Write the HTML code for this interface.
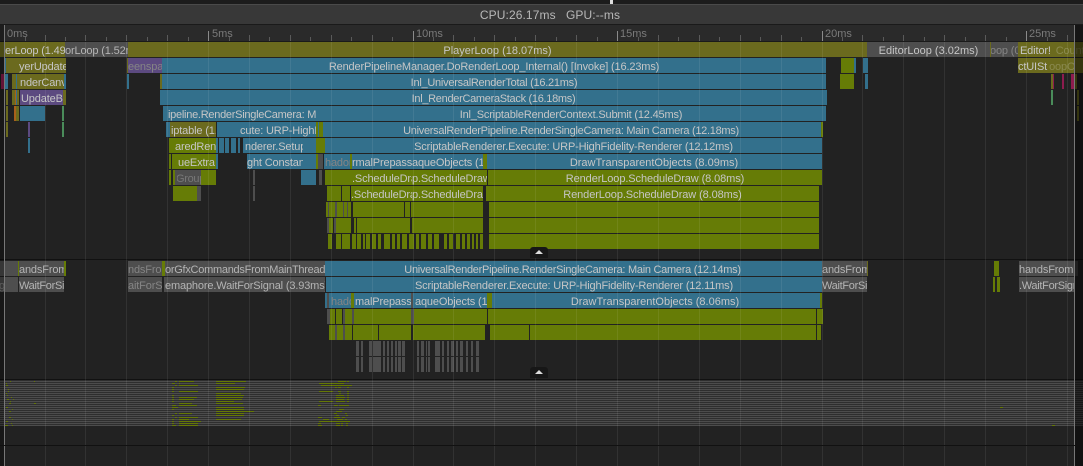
<!DOCTYPE html>
<html><head><meta charset="utf-8">
<style>
html,body{margin:0;padding:0;background:#222}
#p{position:relative;width:1083px;height:466px;overflow:hidden;background:#222;font-family:"Liberation Sans",sans-serif;font-size:11px;color:#c6c6c6}
#p div{position:absolute}
.r{left:0;width:1083px;height:15px}
.r b{position:absolute;top:0;height:15px;line-height:18px;font-weight:normal;white-space:nowrap;overflow:hidden;text-align:center;letter-spacing:-.15px}
.o{background:#6b6a1e}.g{background:#667c06}.u{background:#33708c}.p{background:#5c4a80}.y{background:#4e4e4e;color:#b4b4b4}
.d{color:#858585}.e{background:#4a8c5a}.c{background:#8e1c4e}.f{background:#a8601a}
.l{text-align:left!important}
.t{width:18px;height:11px;background:#171717;border-radius:3px 3px 0 0}
.t:after{content:"";position:absolute;left:5px;top:3px;border-left:4px solid transparent;border-right:4px solid transparent;border-bottom:4px solid #ddd}
svg{position:absolute;left:0;top:0}
</style></head><body><div id="p">
<div style="left:0;top:0;width:1083px;height:4px;background:#1c1c1c"></div>
<div style="left:610px;top:0;width:3px;height:4px;background:#ddd"></div>
<div style="left:0;top:4px;width:1083px;height:1px;background:#4a4a4a"></div>
<div style="left:0;top:5px;width:1083px;height:19px;background:#383838;text-align:center;line-height:20px;font-size:12px;color:#b8b8b8;text-indent:17px;letter-spacing:.1px">CPU:26.17ms&nbsp;&nbsp; GPU:--ms</div>
<div style="left:0;top:24px;width:1083px;height:1px;background:#1a1a1a"></div>
<div style="left:0;top:25px;width:1083px;height:16px;background:#2a2a2a"></div>
<div style="left:0;top:41px;width:1083px;height:1px;background:#1a1a1a"></div>
<div class="lb" style="left:7px;top:27px;color:#7a7a7a;line-height:14px">0ms</div>
<div style="left:212px;top:27px;color:#7a7a7a;line-height:14px">5ms</div>
<div style="left:416px;top:27px;color:#7a7a7a;line-height:14px">10ms</div>
<div style="left:620px;top:27px;color:#7a7a7a;line-height:14px">15ms</div>
<div style="left:825px;top:27px;color:#7a7a7a;line-height:14px">20ms</div>
<div style="left:1029px;top:27px;color:#7a7a7a;line-height:14px">25ms</div>

<div class="r" style="top:42px">
<b class="o l" style="left:0;width:65px;text-indent:5px">erLoop (1.49ms)</b>
<b class="y l" style="left:65px;width:63px">orLoop (1.52ms)</b>
<b class="o" style="left:128px;width:739px;letter-spacing:0">PlayerLoop (18.07ms)</b>
<b class="y" style="left:867px;width:123px;color:#c6c6c6;letter-spacing:0">EditorLoop (3.02ms)</b>
<b class="o" style="left:990px;width:1px"></b>
<b class="y d l" style="left:991px;width:27px;text-indent:-1px">oop (0.1ms)</b>
<b class="o l" style="left:1018px;width:65px;text-indent:2px">Editor!<span style="margin-left:5px;color:#8a8a50">Count</span></b>
</div>
<div class="r" style="top:58px">
<b class="o" style="left:4px;width:2px"></b><b class="u" style="left:5px;width:1px"></b>
<b class="o l" style="left:6px;width:60px;text-indent:13px">yerUpdate</b>
<b class="o" style="left:127px;width:2px"></b>
<b class="p d l" style="left:128px;width:34px">eenspace</b>
<b class="u" style="left:162px;width:664px">RenderPipelineManager.DoRenderLoop_Internal() [Invoke] (16.23ms)</b>
<b class="g" style="left:841px;width:13px"></b><b class="u" style="left:854px;width:2px"></b>
<b class="u" style="left:863px;width:5px"></b>
<b class="o l" style="left:1018px;width:65px">ctUISt<span style="margin-left:2px;color:#8a8a50">oopO</span></b>
</div>
<div class="r" style="top:74px">
<b class="c" style="left:1px;width:3px"></b><b class="u" style="left:5px;width:3px"></b>
<b class="o l" style="left:12px;width:54px;text-indent:8px">nderCanvas</b>
<b class="u" style="left:16px;width:1px"></b><b class="u" style="left:64px;width:2px"></b>
<b class="u" style="left:127px;width:2px"></b>
<b class="o" style="left:160px;width:2px"></b>
<b class="u" style="left:162px;width:664px;letter-spacing:-.26px">Inl_UniversalRenderTotal (16.21ms)</b>
<b class="g" style="left:840px;width:14px"></b>
<b class="u" style="left:865px;width:3px"></b>
<b class="o" style="left:1051px;width:2px"></b><b class="c" style="left:1053px;width:1px"></b>
<b class="c" style="left:1062px;width:2px"></b><b class="c" style="left:1071px;width:4px"></b>
<b class="o" style="left:1075px;width:2px"></b>
</div>
<div class="r" style="top:90px">
<b class="o" style="left:6px;width:2px"></b><b class="o" style="left:12px;width:3px"></b>
<b class="f" style="left:15px;width:1px"></b><b class="u" style="left:16px;width:1px"></b><b class="o" style="left:17px;width:2px"></b>
<b class="p l" style="left:20px;width:43px;text-indent:1px">UpdateBatches</b>
<b class="o" style="left:63px;width:3px"></b>
<b class="u" style="left:160px;width:667px;letter-spacing:-.3px">Inl_RenderCameraStack (16.18ms)</b>
<b class="e" style="left:1051px;width:2px"></b><b class="o" style="left:1077px;width:2px"></b>
</div>
<div class="r" style="top:106px">
<b class="o" style="left:6px;width:2px"></b><b class="f" style="left:14px;width:2px"></b><b class="o" style="left:16px;width:3px"></b>
<b class="u" style="left:20px;width:25px"></b><b class="e" style="left:62px;width:2px"></b>
<b class="u l" style="left:163px;width:153px;text-indent:5px;letter-spacing:-.27px">ipeline.RenderSingleCamera: Main</b>
<b class="u" style="left:316px;width:510px;letter-spacing:-.18px">Inl_ScriptableRenderContext.Submit (12.45ms)</b>
<b class="o" style="left:1077px;width:2px"></b>
</div>
<div class="r" style="top:122px">
<b class="o" style="left:6px;width:2px"></b><b class="p" style="left:28px;width:2px"></b><b class="e" style="left:62px;width:2px"></b>
<b class="u" style="left:166px;width:4px"></b>
<b class="o l" style="left:170px;width:46px;text-indent:1px">iptable (1.2ms)</b>
<b class="u l" style="left:217px;width:99px;text-indent:23px">cute: URP-HighFid</b>
<b class="g" style="left:316px;width:2px"></b><b class="u" style="left:318px;width:1px"></b><b class="g" style="left:319px;width:4px"></b>
<b class="u" style="left:323px;width:499px;letter-spacing:-.29px;text-indent:-3px">UniversalRenderPipeline.RenderSingleCamera: Main Camera (12.18ms)</b>
<b class="g" style="left:821px;width:2px"></b>
</div>
<div class="r" style="top:138px">
<b class="u" style="left:28px;width:2px"></b>
<b class="g l" style="left:169px;width:47px;text-indent:6px">aredRenderer</b>
<b class="u" style="left:216px;width:2px"></b><b class="u" style="left:219px;width:5px"></b><b class="u" style="left:225px;width:4px"></b><b class="u" style="left:231px;width:5px"></b><b class="u" style="left:238px;width:2px"></b>
<b class="u l" style="left:243px;width:60px;text-indent:2px">nderer.Setup</b><b class="u" style="left:303px;width:13px"></b>
<b class="g" style="left:316px;width:9px"></b>
<b class="u" style="left:325px;width:497px;letter-spacing:-.17px">ScriptableRenderer.Execute: URP-HighFidelity-Renderer (12.12ms)</b>
</div>
<div class="r" style="top:154px">
<b class="g" style="left:169px;width:2px"></b>
<b class="g l" style="left:172px;width:44px;text-indent:6px">ueExtra</b>
<b class="u" style="left:216px;width:2px"></b>
<b class="u l" style="left:247px;width:56px">ght Constant</b><b class="u" style="left:303px;width:13px"></b>
<b class="g" style="left:316px;width:2px"></b><b class="y" style="left:318px;width:5px"></b>
<b class="u d l" style="left:324px;width:26px;text-indent:1px">hador</b>
<b class="g" style="left:350px;width:2px"></b>
<b class="u l" style="left:352px;width:60px">rmalPrepass</b>
<b class="u l" style="left:412px;width:71px">aqueObjects (1.2ms)</b>
<b class="g" style="left:483px;width:4px"></b>
<b class="u" style="left:487px;width:335px;letter-spacing:0;text-indent:-1px">DrawTransparentObjects (8.09ms)</b>
</div>
<div class="r" style="top:170px">
<b class="g" style="left:169px;width:2px"></b><b class="g" style="left:173px;width:2px"></b>
<b class="y" style="left:175px;width:2px"></b>
<b class="y d l" style="left:177px;width:24px;text-indent:-1px;letter-spacing:-.3px;color:#777">Group</b>
<b class="g" style="left:201px;width:15px"></b>
<b class="y" style="left:253px;width:2px"></b><b class="u" style="left:301px;width:15px"></b><b class="y" style="left:319px;width:3px"></b>
<b class="g l" style="left:325px;width:87px;text-indent:27px">.ScheduleDraw</b>
<b class="g l" style="left:412px;width:75px">p.ScheduleDraw</b>
<b class="g" style="left:488px;width:334px;letter-spacing:-.1px">RenderLoop.ScheduleDraw (8.08ms)</b>
</div>
<div class="r" style="top:186px">
<b class="g" style="left:173px;width:24px"></b><b class="y" style="left:197px;width:4px"></b>
<b class="y" style="left:253px;width:2px"></b>
<b class="g" style="left:327px;width:14px"></b><b class="g" style="left:342px;width:8px"></b>
<b class="g l" style="left:351px;width:61px">.ScheduleDraw</b>
<b class="g l" style="left:412px;width:71px">p.ScheduleDraw</b>
<b class="g" style="left:486px;width:333px;letter-spacing:-.1px">RenderLoop.ScheduleDraw (8.08ms)</b>
</div>
<div class="r" style="top:202px">
<b class="g" style="left:326px;width:25px"></b><b class="y" style="left:328px;width:1px"></b><b class="y" style="left:335px;width:2px"></b><b class="y" style="left:343px;width:1px"></b><b class="y" style="left:347px;width:1px"></b>
<b class="g" style="left:353px;width:51px"></b><b class="g" style="left:405px;width:5px"></b><b class="g" style="left:411px;width:72px"></b><b class="g" style="left:489px;width:330px"></b>
</div>
<div class="r" style="top:218px">
<b class="y" style="left:327px;width:2px"></b><b class="g" style="left:329px;width:4px"></b><b class="y" style="left:334px;width:2px"></b><b class="g" style="left:336px;width:15px"></b>
<b class="g" style="left:354px;width:2px"></b><b class="g" style="left:357px;width:53px"></b><b class="g" style="left:412px;width:71px"></b><b class="g" style="left:489px;width:330px"></b>
</div>
<div class="r" style="top:234px">
<b class="g" style="left:328px;width:4px"></b><b class="g" style="left:336px;width:5px"></b><b class="g" style="left:342px;width:8px"></b><b class="g" style="left:352px;width:4px"></b><b class="g" style="left:357px;width:4px"></b><b class="g" style="left:363px;width:2px"></b><b class="g" style="left:366px;width:4px"></b><b class="g" style="left:372px;width:4px"></b><b class="g" style="left:378px;width:3px"></b><b class="g" style="left:384px;width:6px"></b><b class="g" style="left:392px;width:3px"></b><b class="g" style="left:397px;width:3px"></b><b class="g" style="left:402px;width:5px"></b><b class="g" style="left:409px;width:5px"></b><b class="g" style="left:416px;width:3px"></b><b class="g" style="left:421px;width:5px"></b><b class="g" style="left:428px;width:4px"></b><b class="g" style="left:434px;width:5px"></b><b class="g" style="left:444px;width:3px"></b><b class="g" style="left:449px;width:4px"></b><b class="g" style="left:456px;width:4px"></b><b class="g" style="left:462px;width:3px"></b><b class="g" style="left:467px;width:3px"></b><b class="g" style="left:472px;width:2px"></b><b class="g" style="left:476px;width:2px"></b><b class="g" style="left:480px;width:3px"></b><b class="g" style="left:489px;width:330px"></b>
</div>

<div style="left:0;top:259px;width:1083px;height:1px;background:#111"></div>
<div class="r" style="top:261px">
<b class="y" style="left:0;width:7px"></b><b class="y" style="left:7px;width:11px"></b><b class="g" style="left:18px;width:1px"></b>
<b class="y l" style="left:19px;width:45px">andsFrom</b><b class="g" style="left:64px;width:2px"></b>
<b class="y d l" style="left:128px;width:34px">ndsFrom</b><b class="g" style="left:162px;width:3px"></b>
<b class="y l" style="left:165px;width:160px;letter-spacing:-.27px">orGfxCommandsFromMainThread</b>
<b class="u" style="left:325px;width:497px;letter-spacing:-.28px;text-indent:-2px">UniversalRenderPipeline.RenderSingleCamera: Main Camera (12.14ms)</b>
<b class="y l" style="left:822px;width:45px">andsFrom</b><b class="o" style="left:867px;width:1px"></b>
<b class="g" style="left:994px;width:5px"></b>
<b class="y l" style="left:1019px;width:55px">handsFromM</b><b class="y" style="left:1074px;width:4px;opacity:.7"></b>
</div>
<div class="r" style="top:277px">
<b class="y d l" style="left:0;width:7px;text-indent:-1px">g</b><b class="y" style="left:7px;width:11px"></b>
<b class="y l" style="left:19px;width:45px;letter-spacing:-.3px">WaitForSignal</b>
<b class="y d l" style="left:128px;width:34px">aitForSi</b>
<b class="y l" style="left:164px;width:161px;text-indent:1px">emaphore.WaitForSignal (3.93ms)</b>
<b class="u" style="left:326px;width:496px;letter-spacing:-.17px">ScriptableRenderer.Execute: URP-HighFidelity-Renderer (12.11ms)</b>
<b class="y l" style="left:822px;width:45px;letter-spacing:-.3px">WaitForSignal</b>
<b class="g" style="left:993px;width:2px"></b><b class="g" style="left:997px;width:3px"></b>
<b class="y l" style="left:1019px;width:55px;letter-spacing:-.3px">.WaitForSignal</b>
</div>
<div class="r" style="top:293px">
<b class="u" style="left:325px;width:2px"></b><b class="y" style="left:327px;width:2px"></b>
<b class="u d l" style="left:329px;width:22px;text-indent:2px">hado</b>
<b class="g" style="left:351px;width:3px"></b>
<b class="u l" style="left:354px;width:57px;text-indent:1px">malPrepass</b>
<b class="y" style="left:411px;width:2px"></b>
<b class="u l" style="left:413px;width:74px;text-indent:2px">aqueObjects (1.2ms)</b>
<b class="g" style="left:487px;width:5px"></b>
<b class="u" style="left:492px;width:328px;letter-spacing:0;text-indent:-2px">DrawTransparentObjects (8.06ms)</b>
<b class="g" style="left:820px;width:2px"></b>
</div>
<div class="r" style="top:309px">
<b class="y" style="left:327px;width:3px"></b><b class="g" style="left:330px;width:5px"></b><b class="g" style="left:336px;width:6px"></b><b class="y" style="left:343px;width:2px"></b><b class="g" style="left:345px;width:7px"></b><b class="y" style="left:352px;width:2px"></b><b class="g" style="left:354px;width:57px"></b><b class="y" style="left:411px;width:3px"></b><b class="g" style="left:414px;width:73px"></b><b class="g" style="left:488px;width:328px"></b><b class="g" style="left:817px;width:6px"></b>
</div>
<div class="r" style="top:325px">
<b class="g" style="left:329px;width:6px"></b><b class="y" style="left:335px;width:2px"></b><b class="g" style="left:337px;width:6px"></b><b class="y" style="left:343px;width:2px"></b><b class="g" style="left:345px;width:7px"></b><b class="g" style="left:353px;width:25px"></b><b class="g" style="left:379px;width:32px"></b><b class="g" style="left:413px;width:72px"></b><b class="g" style="left:490px;width:39px"></b><b class="g" style="left:530px;width:286px"></b><b class="g" style="left:817px;width:4px"></b>
</div>
<div class="r" style="top:341px">
<b class="y" style="left:356px;width:3px"></b><b class="y" style="left:361px;width:2px"></b><b class="y" style="left:369px;width:3px"></b><b class="y" style="left:373px;width:8px"></b><b class="y" style="left:383px;width:2px"></b><b class="y" style="left:387px;width:2px"></b><b class="y" style="left:391px;width:2px"></b><b class="y" style="left:395px;width:2px"></b><b class="y" style="left:398px;width:3px"></b><b class="y" style="left:402px;width:3px"></b><b class="y" style="left:417px;width:2px"></b><b class="y" style="left:421px;width:3px"></b><b class="y" style="left:426px;width:1px"></b><b class="y" style="left:428px;width:2px"></b><b class="y" style="left:435px;width:5px"></b><b class="y" style="left:442px;width:2px"></b><b class="y" style="left:447px;width:2px"></b><b class="y" style="left:451px;width:3px"></b><b class="y" style="left:456px;width:2px"></b><b class="y" style="left:460px;width:3px"></b><b class="y" style="left:466px;width:2px"></b><b class="y" style="left:471px;width:2px"></b><b class="y" style="left:476px;width:3px"></b>
</div>
<div class="r" style="top:357px">
<b class="y" style="left:356px;width:3px"></b><b class="y" style="left:361px;width:2px"></b><b class="y" style="left:369px;width:3px"></b><b class="y" style="left:373px;width:8px"></b><b class="y" style="left:383px;width:2px"></b><b class="y" style="left:387px;width:2px"></b><b class="y" style="left:391px;width:2px"></b><b class="y" style="left:395px;width:2px"></b><b class="y" style="left:398px;width:3px"></b><b class="y" style="left:402px;width:3px"></b><b class="y" style="left:417px;width:2px"></b><b class="y" style="left:421px;width:3px"></b><b class="y" style="left:426px;width:1px"></b><b class="y" style="left:428px;width:2px"></b><b class="y" style="left:435px;width:5px"></b><b class="y" style="left:442px;width:2px"></b><b class="y" style="left:447px;width:2px"></b><b class="y" style="left:451px;width:3px"></b><b class="y" style="left:456px;width:2px"></b><b class="y" style="left:460px;width:3px"></b><b class="y" style="left:466px;width:2px"></b><b class="y" style="left:471px;width:2px"></b><b class="y" style="left:476px;width:3px"></b>
</div>

<div style="left:0;top:379px;width:1083px;height:1px;background:#111"></div>
<div style="left:0;top:380px;width:1083px;height:46px;background:repeating-linear-gradient(180deg,#2e2e2e 0,#2e2e2e 1px,#4c4c4c 1px,#4c4c4c 2px)"></div>
<svg width="1083" height="466" shape-rendering="crispEdges">
<path fill="none" stroke="#657806" stroke-width="1" transform="translate(0,.5)" d="M216 381h30M216 383h19M216 387h29M216 389h28M216 393h25M216 395h28M216 397h27M216 399h26M216 401h18M216 403h27M216 407h28M216 409h28M216 411h38M216 413h28M216 415h28M216 419h25
M179 381h15M179 383h1M179 385h19M179 391h19M179 397h18M179 399h15M179 403h13M179 405h18M179 413h13M179 417h19M179 419h10M179 421h22M179 423h19M179 425h19
M175 381h2M172 383h3M175 385h2M172 387h2M172 389h2M172 391h2M172 395h2M172 397h2M172 399h2M172 401h2M172 405h4M172 407h6M172 409h2M175 413h2M172 415h2M175 417h2M172 419h2M172 421h2M172 423h2M172 425h4
M338 381h8M347 381h2M319 383h25M321 385h31M335 387h2M338 387h3M347 387h2M319 391h14M338 391h3M347 391h2M339 393h2M347 393h2M336 395h8M347 395h2M336 397h9M347 397h2M336 399h8M347 399h2M319 401h14M336 401h9M347 401h2M318 405h3M334 405h4M339 405h8M347 405h2M339 409h5M336 411h6M334 413h3M345 413h2M336 415h3M346 415h2M334 417h6M342 417h3M318 417h4M323 419h6M337 419h6M345 419h2M319 421h31M318 423h3M336 423h4M341 423h2M346 423h2M318 425h4M336 425h4M341 425h2M346 425h2
M10 381h1M34 381h1M6 383h1M6 385h2M8 389h1M8 391h1M6 393h1M7 395h1M11 397h1M13 399h1M7 399h2M10 401h1M9 403h2M34 403h2M6 407h2M12 409h1M9 411h2M9 417h2M12 419h1M6 421h2M11 423h1M5 425h3M12 425h1
M1000 407h3M1052 425h3"/>
<path fill="none" stroke="#5a5a5a" stroke-width="1" transform="translate(.5,0)" d="M45 35v6M85 35v6M126 35v6M167 35v6M249 35v6M290 35v6M331 35v6M372 35v6M453 35v6M494 35v6M535 35v6M576 35v6M658 35v6M699 35v6M740 35v6M781 35v6M862 35v6M903 35v6M944 35v6M985 35v6M1067 35v6
M65 37v4M106 37v4M147 37v4M188 37v4M229 37v4M269 37v4M310 37v4M351 37v4M392 37v4M433 37v4M474 37v4M515 37v4M556 37v4M597 37v4M638 37v4M678 37v4M719 37v4M760 37v4M801 37v4M842 37v4M883 37v4M924 37v4M965 37v4M1006 37v4M1047 37v4M25 37v4"/>
<path fill="none" stroke="#8a8a8a" stroke-width="1" transform="translate(.5,0)" d="M208 31v10M413 31v10M617 31v10M822 31v10M1026 31v10"/>
<path fill="none" stroke="#fff" stroke-opacity=".075" stroke-width="1" transform="translate(.5,0)" d="M45 42V445M85 42V445M126 42V445M167 42V445M208 42V445M249 42V445M290 42V445M331 42V445M372 42V445M413 42V445M453 42V445M494 42V445M535 42V445M576 42V445M617 42V445M658 42V445M699 42V445M740 42V445M781 42V445M822 42V445M862 42V445M903 42V445M944 42V445M985 42V445M1026 42V445M1067 42V445M45 446V466M85 446V466M126 446V466M167 446V466M208 446V466M249 446V466M290 446V466M331 446V466M372 446V466M413 446V466M453 446V466M494 446V466M535 446V466M576 446V466M617 446V466M658 446V466M699 446V466M740 446V466M781 446V466M822 446V466M862 446V466M903 446V466M944 446V466M985 446V466M1026 446V466M1067 446V466"/>
</svg>
<div style="left:0;top:25px;width:4px;height:441px;background:rgba(0,0,0,.3)"></div>
<div style="left:1075px;top:25px;width:8px;height:441px;background:rgba(0,0,0,.5)"></div>
<div style="left:4px;top:25px;width:1px;height:441px;background:#777"></div>
<div style="left:1074px;top:25px;width:1px;height:441px;background:#777"></div>
<div style="left:0;top:445px;width:1083px;height:1px;background:#111"></div>
<div class="t" style="left:530px;top:247px"></div>
<div class="t" style="left:530px;top:367px"></div>
</div></body></html>
